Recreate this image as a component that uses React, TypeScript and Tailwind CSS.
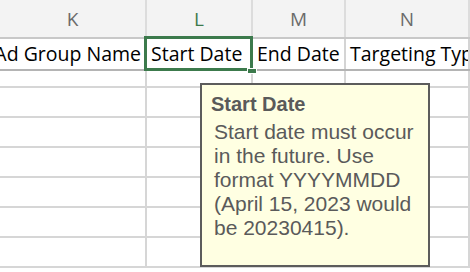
const columns = [
  { letter: "K", width: "w-[147px]", label: "Ad Group Name", align: "justify-end" },
  { letter: "L", width: "w-[106px]", label: "Start Date", align: "justify-start" },
  { letter: "M", width: "w-[93px]", label: "End Date", align: "justify-start" },
  { letter: "N", width: "w-[124px]", label: "Targeting Type", align: "justify-start" },
];

const emptyRows = [
  "h-[17px]",
  "h-[30px]",
  "h-[30px]",
  "h-[30px]",
  "h-[30px]",
  "h-[30px]",
  "h-[30px]",
];

const commentLines = [
  "Start date must occur",
  "in the future. Use",
  "format YYYYMMDD",
  "(April 15, 2023 would",
  "be 20230415).",
];

export default function App() {
  return (
    <div className="relative h-[272px] w-[470px] overflow-hidden bg-white">
      {/* COLUMN LETTERS */}
      <div className="flex h-[39px] border-b-2 border-[#c8c8c8] bg-[#f3f3f3]">
        {columns.map((col) => (
          <div
            key={col.letter}
            className={`${col.width} flex shrink-0 items-center justify-center border-r-2 border-[#dcdcdc] pt-[1px] font-['Open_Sans',sans-serif] text-[19px] ${
              col.letter === "L" ? "text-[#3c7a4c]" : "text-[#6b6b6b]"
            }`}
          >
            {col.letter}
          </div>
        ))}
      </div>

      {/* HEADER CELLS */}
      <div className="flex h-[32px] border-b-2 border-[#b4b4b4]">
        {columns.map((col) => (
          <div
            key={col.label}
            className={`${col.width} relative shrink-0 border-r-2 border-[#d4d4d4]`}
          >
            <div
              className={`flex h-full items-center overflow-hidden whitespace-nowrap px-[4px] font-['Open_Sans',sans-serif] text-[19.5px] text-black ${col.align}`}
            >
              {col.label}
            </div>
            {col.letter === "L" && (
              <>
                <div className="pointer-events-none absolute left-[-3px] right-[-2px] top-[-3px] bottom-[-2px] border-[3px] border-[#3c7a4c]" />
                <div className="absolute right-[-6px] bottom-[-5px] h-[6px] w-[10px] border border-white bg-[#3c7a4c]" />
              </>
            )}
          </div>
        ))}
      </div>

      {/* EMPTY ROWS */}
      {emptyRows.map((h, i) => (
        <div key={i} className={`flex ${h} border-b-2 border-[#d6d6d6]`}>
          {columns.map((col) => (
            <div
              key={col.letter}
              className={`${col.width} shrink-0 border-r-2 border-[#d6d6d6]`}
            />
          ))}
        </div>
      ))}

      {/* COMMENT TOOLTIP */}
      <div className="absolute left-[200px] top-[83px] h-[184px] w-[230px] border-2 border-[#5c5c5c] bg-[#ffffe2] pl-[9px] pt-[7px] font-['Liberation_Sans',Arial,sans-serif] text-[#5a5a5a]">
        <div className="text-[20px] font-bold leading-[24px]">Start Date</div>
        <div className="mt-[4px] flex flex-col pl-[3px]">
          {commentLines.map((line) => (
            <span
              key={line}
              className="whitespace-nowrap text-[21px] leading-[24px]"
            >
              {line}
            </span>
          ))}
        </div>
      </div>
    </div>
  );
}
